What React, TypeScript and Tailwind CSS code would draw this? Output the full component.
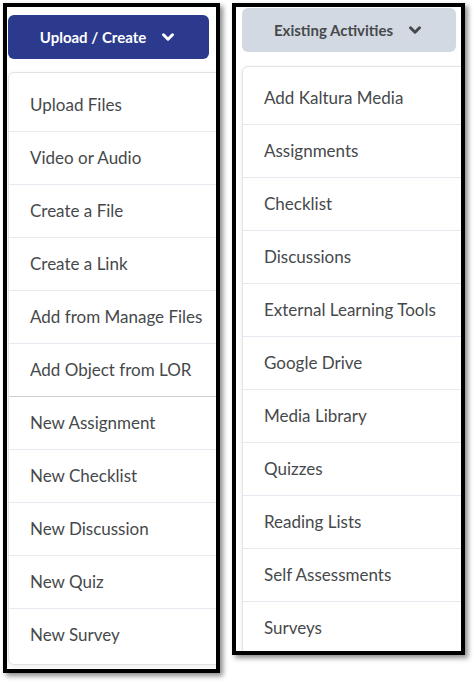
import { ChevronDown } from "lucide-react";

const createItems = [
  "Upload Files",
  "Video or Audio",
  "Create a File",
  "Create a Link",
  "Add from Manage Files",
  "Add Object from LOR",
  "New Assignment",
  "New Checklist",
  "New Discussion",
  "New Quiz",
  "New Survey",
];

const activityItems = [
  "Add Kaltura Media",
  "Assignments",
  "Checklist",
  "Discussions",
  "External Learning Tools",
  "Google Drive",
  "Media Library",
  "Quizzes",
  "Reading Lists",
  "Self Assessments",
  "Surveys",
];

function MenuItem({ label, first, strong }: { label: string; first?: boolean; strong?: boolean }) {
  return (
    <div
      className={`h-[53px] flex items-center pl-[21px] text-[17px] text-[#46494b] whitespace-nowrap ${
        first ? "" : strong ? "border-t border-[#cdd1d5]" : "border-t border-[#e6eaf0]"
      }`}
    >
      {label}
    </div>
  );
}

export default function App() {
  return (
    <div
      className="w-[474px] h-[685px] bg-white flex items-start pt-[3px] pl-[3px] gap-[12px]"
      style={{ fontFamily: "Lato, 'Open Sans', sans-serif" }}
    >
      {/* Upload / Create */}
      <div className="w-[217px] h-[670px] border-4 border-black bg-white overflow-hidden shadow-[3px_3px_5px_rgba(0,0,0,0.45)] shrink-0">
        <div className="pt-[8px] pl-[1px]">
          <div className="w-[201px] h-[44px] rounded-[6px] bg-[#2b3a8c] text-white font-bold text-[15px] flex items-center justify-center gap-[13px]">
            <span>Upload / Create</span>
            <ChevronDown className="w-[18px] h-[18px]" strokeWidth={4} />
          </div>
          <div className="mt-[13px] w-[230px] rounded-[6px] border border-[#e0e3e6] bg-white pt-[5px] pb-[3px] shadow-[0_2px_6px_rgba(0,0,0,0.08)]">
            {createItems.map((label, i) => (
              <MenuItem key={label} label={label} first={i === 0} strong={label === "New Assignment"} />
            ))}
          </div>
        </div>
      </div>

      {/* Existing Activities */}
      <div className="w-[233px] h-[652px] border-4 border-black bg-white overflow-hidden shadow-[3px_3px_5px_rgba(0,0,0,0.45)] shrink-0">
        <div className="pt-[1px] pl-[6px]">
          <div className="w-[214px] h-[44px] rounded-[6px] bg-[#d3d9e3] text-[#46494b] font-bold text-[15px] flex items-center justify-center gap-[13px]">
            <span>Existing Activities</span>
            <ChevronDown className="w-[18px] h-[18px]" strokeWidth={4} />
          </div>
          <div className="mt-[14px] w-[240px] rounded-[6px] border border-[#e0e3e6] bg-white pt-[4px] shadow-[0_2px_6px_rgba(0,0,0,0.08)]">
            {activityItems.map((label, i) => (
              <MenuItem key={label} label={label} first={i === 0} />
            ))}
          </div>
        </div>
      </div>
    </div>
  );
}
